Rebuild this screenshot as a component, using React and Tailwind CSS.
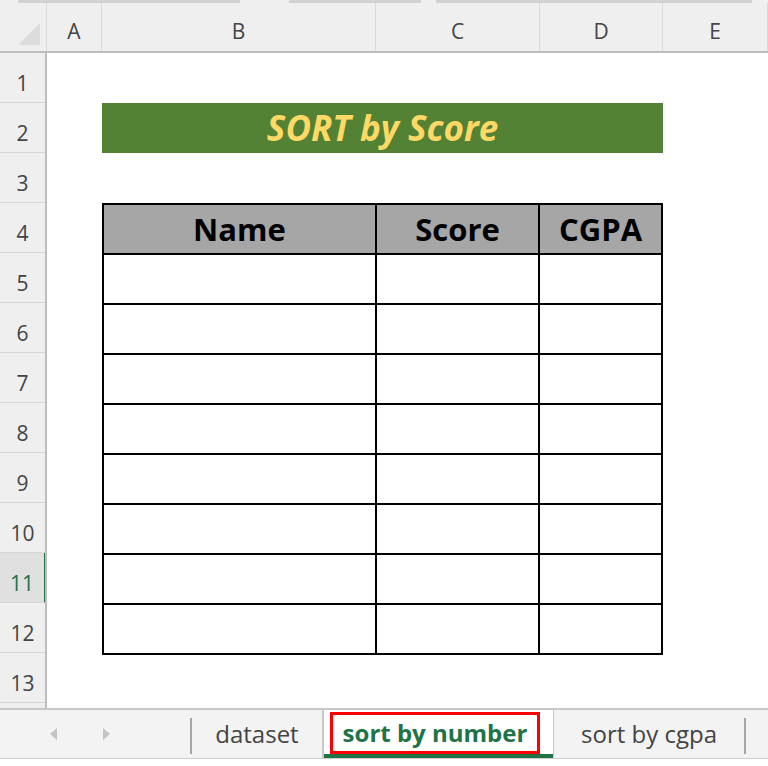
import React from "react";

const cols = [
  { label: "A", w: "w-[55px]" },
  { label: "B", w: "w-[274px]" },
  { label: "C", w: "w-[164px]" },
  { label: "D", w: "w-[123px]" },
  { label: "E", w: "flex-1" },
];

const rowNums = [1, 2, 3, 4, 5, 6, 7, 8, 9, 10, 11, 12, 13];

const font = { fontFamily: "'Open Sans', 'Noto Sans', sans-serif" };

function ColumnHeader() {
  return (
    <div className="flex h-[50px] bg-[#efefef] border-b-2 border-[#bdbdbd]">
      <div className="w-[47px] shrink-0 relative border-r border-[#dadada]">
        <div className="absolute right-[6px] bottom-[6px] w-0 h-0 border-l-[22px] border-l-transparent border-b-[22px] border-b-[#dcdcdc]" />
      </div>
      {cols.map((c) => (
        <div
          key={c.label}
          className={`${c.w} shrink-0 flex items-center justify-center pt-[10px] border-r border-[#dadada] text-[21px] text-[#444]`}
        >
          {c.label}
        </div>
      ))}
    </div>
  );
}

function RowHeader() {
  return (
    <div className="w-[47px] shrink-0 bg-[#efefef] border-r-2 border-[#bdbdbd] overflow-hidden">
      {rowNums.map((n) => (
        <div
          key={n}
          className={`h-[50px] flex items-center justify-center pt-[12px] border-b border-[#d6d6d6] text-[21px] ${
            n === 11 ? "bg-[#e0e0e0] text-[#217346] border-r-[3px] border-r-[#217346] mr-[-2px]" : "text-[#444]"
          }`}
        >
          {n}
        </div>
      ))}
    </div>
  );
}

function SheetTable() {
  const rows = [0, 1, 2, 3, 4, 5, 6, 7];
  return (
    <table className="ml-[55px] border-collapse border-2 border-black" style={{ width: 561 }}>
      <thead>
        <tr className="h-[50px] bg-[#a6a6a6]">
          <th className="w-[274px] border-2 border-black text-[31px] font-bold text-black">Name</th>
          <th className="w-[164px] border-2 border-black text-[31px] font-bold text-black">Score</th>
          <th className="w-[123px] border-2 border-black text-[31px] font-bold text-black">CGPA</th>
        </tr>
      </thead>
      <tbody>
        {rows.map((r) => (
          <tr key={r} className="h-[50px] bg-white">
            <td className="border-2 border-black" />
            <td className="border-2 border-black" />
            <td className="border-2 border-black" />
          </tr>
        ))}
      </tbody>
    </table>
  );
}

function TabBar() {
  return (
    <div className="h-[50px] flex bg-[#f3f3f3] border-t-2 border-[#c8c8c8] text-[24px]">
      <div className="w-[190px] shrink-0 flex items-center">
        <div className="ml-[50px] w-0 h-0 border-y-[6px] border-y-transparent border-r-[7px] border-r-[#c4c4c4]" />
        <div className="ml-[46px] w-0 h-0 border-y-[6px] border-y-transparent border-l-[7px] border-l-[#c4c4c4]" />
      </div>
      <div className="w-[2px] h-[36px] mt-[8px] bg-[#a8a8a8]" />
      <div className="w-[132px] shrink-0 flex items-center justify-center text-[#444] border-r-2 border-[#c8c8c8]">
        dataset
      </div>
      <div className="w-[229px] shrink-0 relative bg-white border-b-[4px] border-[#217346]">
        <div className="absolute left-[6px] top-[2px] w-[210px] h-[42px] border-[3px] border-[#ff0000] flex items-center justify-center font-bold text-[#217346]">
          sort by number
        </div>
      </div>
      <div className="w-[191px] shrink-0 flex items-center justify-center text-[#444] border-l border-[#c8c8c8]">
        sort by cgpa
      </div>
      <div className="w-[2px] h-[36px] mt-[8px] bg-[#a8a8a8]" />
    </div>
  );
}

export default function App() {
  return (
    <div className="w-[768px] h-[766px] flex flex-col bg-white overflow-hidden" style={font}>
      <div className="h-[3px] bg-[#f0f0f0] flex">
        <div className="ml-[18px] w-[222px] bg-[#d2d2d2]" />
        <div className="ml-[49px] w-[132px] bg-[#d2d2d2]" />
        <div className="ml-[15px] w-[316px] bg-[#d2d2d2]" />
      </div>
      <ColumnHeader />
      <div className="h-[655px] flex overflow-hidden">
        <RowHeader />
        <div className="flex-1 bg-white">
          <div className="h-[50px]" />
          <div className="ml-[55px] w-[561px] h-[50px] bg-[#548235] flex items-center justify-center text-[35px] font-bold italic text-[#ffd966]">
            SORT by Score
          </div>
          <div className="h-[50px]" />
          <SheetTable />
        </div>
      </div>
      <TabBar />
      <div className="flex-1 bg-white border-t border-[#d0d0d0]" />
    </div>
  );
}
